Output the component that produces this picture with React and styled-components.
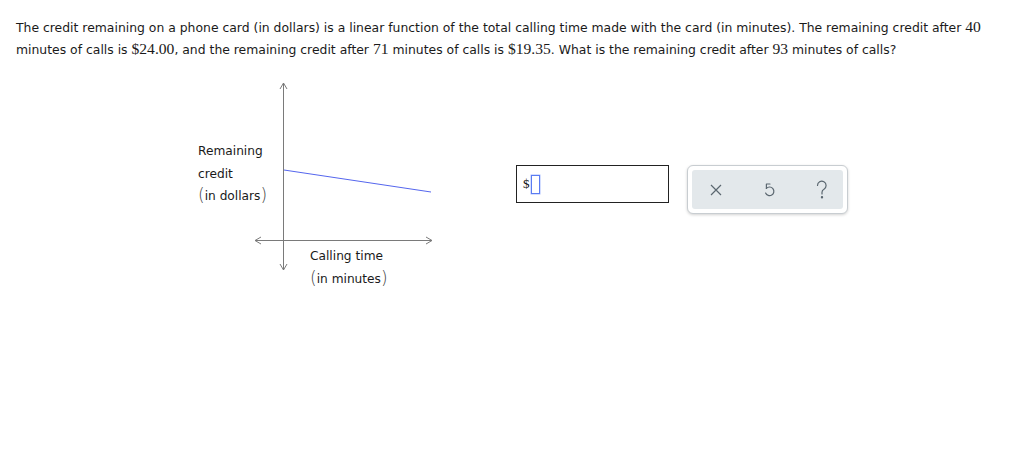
import React from 'react';
import styled, { createGlobalStyle } from 'styled-components';

const GlobalStyle = createGlobalStyle`
  html, body {
    margin: 0;
    padding: 0;
    background: #fff;
  }
  body {
    font-family: "DejaVu Sans", Verdana, sans-serif;
    color: #1a1a1a;
  }
`;

const Page = styled.div`
  width: 1024px;
  height: 457px;
  padding: 17px 16px 0 16px;
  box-sizing: border-box;
  overflow: hidden;
`;

const Question = styled.p`
  margin: 0;
  font-size: 12.4px;
  line-height: 22px;
  max-width: 985px;
`;

const M = styled.span`
  font-family: "Liberation Serif", "Times New Roman", serif;
  font-size: 15.6px;
  line-height: 1;
`;

const Workspace = styled.div`
  display: flex;
  align-items: flex-start;
  margin-top: 19px;
  padding-left: 179px;
`;

const Figure = styled.div`
  position: relative;
  width: 245px;
  height: 215px;
  flex-shrink: 0;
`;

const Plot = styled.svg`
  position: absolute;
  left: 0;
  top: 0;
`;

const AxisLabel = styled.div`
  position: absolute;
  left: ${p => p.$x}px;
  top: ${p => p.$y}px;
  display: flex;
  flex-direction: column;
  font-size: 12.2px;
  line-height: 22.5px;
  color: #1a1a1a;
  white-space: nowrap;
`;

const Paren = styled.span`
  font-family: "DejaVu Sans", sans-serif;
  font-size: 17px;
  font-weight: 200;
  color: #444;
  line-height: 1;
  vertical-align: -1px;
`;

const AnswerBox = styled.div`
  margin-left: 76px;
  margin-top: 85px;
  width: 153px;
  height: 38px;
  border: 1px solid #222;
  box-sizing: border-box;
  display: flex;
  align-items: center;
  padding-left: 6px;
  gap: 1px;
`;

const Dollar = styled.span`
  font-family: "Liberation Serif", "Times New Roman", serif;
  font-size: 13px;
  color: #111;
`;

const Caret = styled.span`
  display: block;
  width: 9px;
  height: 19px;
  box-sizing: border-box;
  border: 1.5px solid #5b7cf2;
  box-shadow: 0 0 0 0.5px #a9bcff;
`;

const Tools = styled.div`
  margin-left: 18px;
  margin-top: 85px;
  width: 161px;
  height: 49px;
  box-sizing: border-box;
  border: 1px solid #c8cdd1;
  border-radius: 6px;
  box-shadow: 0 1px 3px rgba(0, 0, 0, 0.18);
  padding: 4px;
  background: #fff;
`;

const ToolTray = styled.div`
  height: 100%;
  background: #e3e8eb;
  border-radius: 3px;
  display: flex;
  align-items: center;
  padding-left: 14px;
  gap: 33px;
`;

const ToolButton = styled.button`
  border: 0;
  background: none;
  padding: 0;
  width: 20px;
  height: 20px;
  display: flex;
  align-items: center;
  justify-content: center;
  color: #5b6770;
  cursor: pointer;
`;

const arrow = '#7a7a7a';

const Graph = () => (
  <Figure>
    <Plot width="245" height="215" viewBox="0 0 245 215">
      <g stroke={arrow} strokeWidth="1" fill="none">
        <line x1="88.5" y1="3" x2="88.5" y2="190" />
        <polyline points="85,9 88.5,3 92,9" />
        <polyline points="85,184 88.5,190 92,184" />
        <line x1="60" y1="160.5" x2="237" y2="160.5" />
        <polyline points="66,157 60,160.5 66,164" />
        <polyline points="231,157 237,160.5 231,164" />
      </g>
      <line x1="89" y1="90" x2="236" y2="112" stroke="#5566ee" strokeWidth="1" />
    </Plot>
    <AxisLabel $x={3} $y={60}>
      <span>Remaining</span>
      <span>credit</span>
      <span><Paren>(</Paren>in dollars<Paren>)</Paren></span>
    </AxisLabel>
    <AxisLabel $x={115} $y={165}>
      <span>Calling time</span>
      <span><Paren>(</Paren>in minutes<Paren>)</Paren></span>
    </AxisLabel>
  </Figure>
);

const ClearIcon = () => (
  <svg width="12" height="12" viewBox="0 0 12 12" fill="none" stroke="currentColor" strokeWidth="1.2">
    <path d="M1 1 L11 11 M11 1 L1 11" />
  </svg>
);

const UndoIcon = () => (
  <svg width="16" height="18" viewBox="0 0 16 18" fill="none" stroke="currentColor" strokeWidth="1.2" strokeLinecap="round" strokeLinejoin="round">
    <path d="M9 3 H5.4 V7.4" />
    <path d="M5.4 7.4 A4.3 4.3 0 1 1 4.6 12" />
  </svg>
);

const HelpIcon = () => (
  <svg width="14" height="20" viewBox="0 0 14 20" fill="none" stroke="currentColor" strokeWidth="1.2" strokeLinecap="round">
    <path d="M2.5 5.5 A4.3 4.3 0 1 1 9 9.2 C7.6 10 7 10.8 7 12.2 V14" />
    <circle cx="7" cy="17.2" r="0.6" fill="currentColor" />
  </svg>
);

export default function App() {
  return (
    <Page>
      <GlobalStyle />
      <Question>
        The credit remaining on a phone card (in dollars) is a linear function of the total calling time made with the card (in minutes). The remaining credit after <M>40</M> minutes of calls is <M>$24.00</M>, and the remaining credit after <M>71</M> minutes of calls is <M>$19.35</M>. What is the remaining credit after <M>93</M> minutes of calls?
      </Question>
      <Workspace>
        <Graph />
        <AnswerBox>
          <Dollar>$</Dollar>
          <Caret />
        </AnswerBox>
        <Tools>
          <ToolTray>
            <ToolButton aria-label="Clear"><ClearIcon /></ToolButton>
            <ToolButton aria-label="Undo"><UndoIcon /></ToolButton>
            <ToolButton aria-label="Help"><HelpIcon /></ToolButton>
          </ToolTray>
        </Tools>
      </Workspace>
    </Page>
  );
}
